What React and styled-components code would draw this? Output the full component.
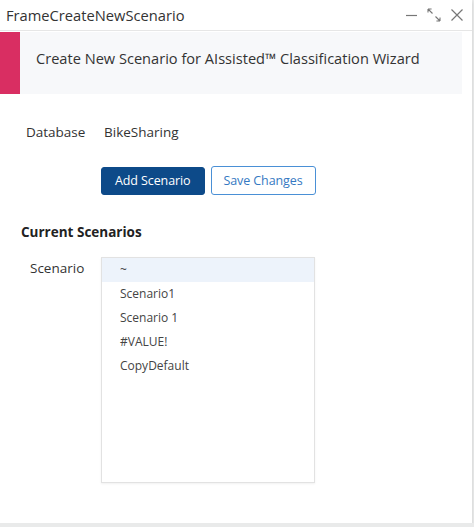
import React from "react";
import styled, { createGlobalStyle } from "styled-components";

const Global = createGlobalStyle`
  html, body { margin: 0; padding: 0; background: #e9eaea; }
  body { font-family: "Open Sans", "Noto Sans", sans-serif; color: #333; }
`;

const Window = styled.div`
  width: 472px;
  height: 523px;
  background: #fff;
  box-shadow: 0 2px 3px rgba(0,0,0,0.12);
  display: flex;
  flex-direction: column;
  overflow: hidden;
`;

const TitleBar = styled.div`
  height: 30px;
  display: flex;
  align-items: center;
  padding: 0 8px 0 6px;
  border-bottom: 1px solid #e6e6e6;
`;

const Title = styled.div`
  flex: 1;
  font-size: 14.7px;
  color: #333;
  margin-top: -1px;
`;

const Controls = styled.div`
  display: flex;
  align-items: center;
  gap: 8px;
  color: #777;
`;

const Header = styled.div`
  margin-top: 1px;
  width: 462px;
  height: 62px;
  background: #f7f8fa;
  display: flex;
  align-items: center;
`;

const Accent = styled.div`
  width: 20px;
  align-self: stretch;
  background: #d92e62;
`;

const HeaderText = styled.div`
  padding-left: 16px;
  font-size: 14.6px;
  color: #333;
  margin-top: -11px;
`;

const Content = styled.div`
  padding: 29px 0 0 0;
  display: flex;
  flex-direction: column;
`;

const Row = styled.div`
  display: flex;
  align-items: ${p => p.$top ? "flex-start" : "center"};
`;

const Label = styled.div`
  width: ${p => p.$w}px;
  padding-left: ${p => p.$pl}px;
  font-size: 13.5px;
  color: #333;
  box-sizing: border-box;
`;

const Value = styled.div`
  font-size: 13.5px;
  color: #333;
`;

const Buttons = styled.div`
  display: flex;
  gap: 6px;
  padding-left: 101px;
  margin-top: 25px;
  align-items: center;
`;

const Button = styled.button`
  height: ${p => p.$primary ? 28 : 29}px;
  padding: 0 ${p => p.$primary ? 13 : 12}px;
  border-radius: 3px;
  font-family: "Open Sans", "Noto Sans", sans-serif;
  font-size: 12.5px;
  cursor: pointer;
  background: ${p => p.$primary ? "#0d4a89" : "#fff"};
  color: ${p => p.$primary ? "#fff" : "#3579c2"};
  border: 1px solid ${p => p.$primary ? "#0d4a89" : "#4a90d6"};
  letter-spacing: -0.1px;
`;

const SectionTitle = styled.div`
  margin-top: 28px;
  padding-left: 21px;
  font-size: 13.5px;
  font-weight: 700;
  color: #222;
`;

const ListRow = styled(Row)`
  margin-top: 16px;
`;

const List = styled.div`
  width: 214px;
  height: 226px;
  border: 1px solid #e2e2e2;
  box-shadow: 0 1px 2px rgba(0,0,0,0.06);
  box-sizing: border-box;
  display: flex;
  flex-direction: column;
`;

const Item = styled.div`
  height: 24px;
  line-height: 24px;
  padding-left: 18px;
  font-size: 12px;
  color: #444;
  background: ${p => p.$selected ? "#edf3fb" : "transparent"};
`;

const ScenarioLabel = styled(Label)`
  padding-top: 2px;
`;

export default function App() {
  const items = ["~", "Scenario1", "Scenario 1", "#VALUE!", "CopyDefault"];
  return (
    <>
      <Global />
      <Window>
        <TitleBar>
          <Title>FrameCreateNewScenario</Title>
          <Controls>
            <svg width="13" height="14" viewBox="0 0 13 14">
              <path d="M1 7.5h11" stroke="#777" strokeWidth="1.2" />
            </svg>
            <svg width="16" height="16" viewBox="0 0 16 16" fill="none" stroke="#777" strokeWidth="1.1">
              <path d="M2 2l4.5 4.5M2 2h3.6M2 2v3.6" />
              <path d="M14 14l-4.5-4.5M14 14h-3.6M14 14v-3.6" />
            </svg>
            <svg width="14" height="14" viewBox="0 0 14 14" fill="none" stroke="#777" strokeWidth="1.2">
              <path d="M1.5 1.5l11 11M12.5 1.5l-11 11" />
            </svg>
          </Controls>
        </TitleBar>
        <Header>
          <Accent />
          <HeaderText>Create New Scenario for AIssisted™ Classification Wizard</HeaderText>
        </Header>
        <Content>
          <Row>
            <Label $w={104} $pl={26}>Database</Label>
            <Value>BikeSharing</Value>
          </Row>
          <Buttons>
            <Button $primary>Add Scenario</Button>
            <Button>Save Changes</Button>
          </Buttons>
          <SectionTitle>Current Scenarios</SectionTitle>
          <ListRow $top>
            <ScenarioLabel $w={101} $pl={30}>Scenario</ScenarioLabel>
            <List>
              {items.map((it, i) => (
                <Item key={i} $selected={i === 0}>{it}</Item>
              ))}
            </List>
          </ListRow>
        </Content>
      </Window>
    </>
  );
}
